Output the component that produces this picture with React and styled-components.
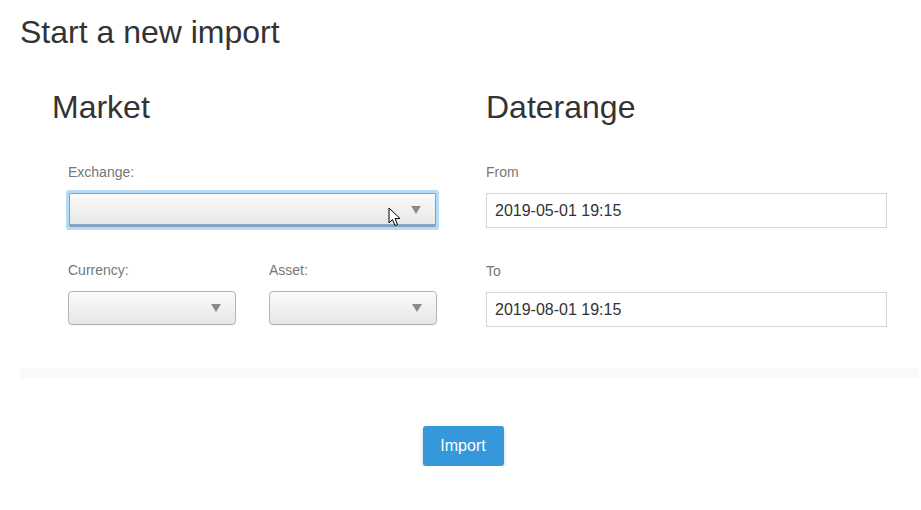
import React from 'react';
import styled, { createGlobalStyle } from 'styled-components';

const GlobalStyle = createGlobalStyle`
  body {
    margin: 0;
    background: #ffffff;
    font-family: "Liberation Sans", Arial, sans-serif;
    color: #333333;
  }
`;

const Page = styled.div`
  padding: 0 2px 0 20px;
`;

const Title = styled.h1`
  margin: 0;
  padding-top: 14px;
  font-size: 32px;
  font-weight: 400;
  line-height: 36px;
  color: #333;
`;

const Columns = styled.div`
  display: grid;
  grid-template-columns: 434px 401px;
  padding: 39px 0 0 32px;
`;

const Section = styled.div`
  display: flex;
  flex-direction: column;
`;

const Heading = styled.h2`
  margin: 0 0 39px;
  font-size: 32px;
  font-weight: 400;
  line-height: 36px;
  color: #333;
`;

const Fields = styled.div`
  display: flex;
  flex-direction: column;
  gap: 35px;
  padding-left: ${p => p.$inset || 0}px;
  width: ${p => p.$width}px;
`;

const Row = styled.div`
  display: flex;
  gap: 33px;
`;

const Field = styled.div`
  display: flex;
  flex-direction: column;
  flex: 1;
`;

const Label = styled.label`
  font-size: 14px;
  line-height: 16px;
  color: #777;
  margin-bottom: 13px;
`;

const SelectBox = styled.div`
  position: relative;
  height: 34px;
  box-sizing: border-box;
  border: 1px solid #b4b4b4;
  border-radius: ${p => (p.$focused ? 1 : 4)}px;
  background: linear-gradient(#fbfbfb, #e6e6e6);
  box-shadow: ${p =>
    p.$focused
      ? 'inset 0 -2px 0 #7aa7dd, 0 0 0 3px #b5dcf6'
      : '0 1px 1px rgba(0,0,0,0.04)'};
  ${p => p.$focused && 'margin: 0 1px; border-color: #9a9a9a;'}
`;

const Arrow = styled.span`
  position: absolute;
  right: 14px;
  top: 50%;
  transform: translateY(-50%);
  width: 0;
  height: 0;
  border-left: 5px solid transparent;
  border-right: 5px solid transparent;
  border-top: 8px solid #8a8a8a;
`;

const Cursor = styled.svg`
  position: absolute;
  right: 33px;
  top: 13px;
`;

const TextInput = styled.div`
  height: 35px;
  box-sizing: border-box;
  border: 1px solid #d4d4d4;
  padding: 0 8px;
  display: flex;
  align-items: center;
  font-size: 16px;
  color: #333;
`;

const Divider = styled.div`
  margin-top: 41px;
  height: 10px;
  background: #f9f9f9;
`;

const Footer = styled.div`
  display: flex;
  justify-content: center;
  padding: 48px 13px 0 0;
`;

const Button = styled.button`
  height: 40px;
  width: 81px;
  border: none;
  border-radius: 3px;
  background: #3498db;
  color: #fff;
  font-family: "Liberation Sans", Arial, sans-serif;
  font-size: 16px;
  box-shadow: 0 2px 4px rgba(0,0,0,0.18);
  cursor: pointer;
`;

function Select({ focused, children }) {
  return (
    <SelectBox $focused={focused}>
      {children}
      <Arrow />
    </SelectBox>
  );
}

export default function App() {
  return (
    <>
      <GlobalStyle />
      <Page>
        <Title>Start a new import</Title>
        <Columns>
          <Section>
            <Heading>Market</Heading>
            <Fields $inset={16} $width={369}>
              <Field>
                <Label>Exchange:</Label>
                <Select focused>
                  <Cursor width="14" height="20" viewBox="0 0 14 20">
                    <path d="M1 1 L1 16 L4.5 12.5 L7 18.5 L9.5 17.5 L7 11.5 L12 11.5 Z" fill="#fff" stroke="#000" strokeWidth="1" strokeLinejoin="round" />
                  </Cursor>
                </Select>
              </Field>
              <Row>
                <Field>
                  <Label>Currency:</Label>
                  <Select />
                </Field>
                <Field>
                  <Label>Asset:</Label>
                  <Select />
                </Field>
              </Row>
            </Fields>
          </Section>
          <Section>
            <Heading>Daterange</Heading>
            <Fields $width={401}>
              <Field>
                <Label>From</Label>
                <TextInput>2019-05-01 19:15</TextInput>
              </Field>
              <Field>
                <Label>To</Label>
                <TextInput>2019-08-01 19:15</TextInput>
              </Field>
            </Fields>
          </Section>
        </Columns>
        <Divider />
        <Footer>
          <Button>Import</Button>
        </Footer>
      </Page>
    </>
  );
}
